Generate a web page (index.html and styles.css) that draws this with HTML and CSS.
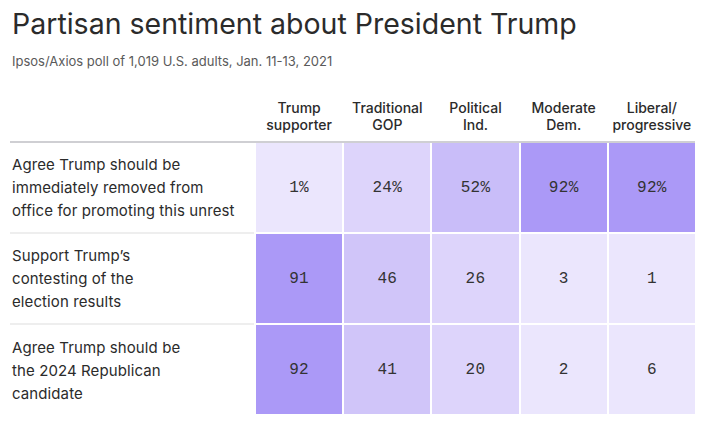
FILE: index.html
```html
<!DOCTYPE html>
<html>
<head>
<meta charset="utf-8">
<link rel="stylesheet" href="styles.css">
</head>
<body>
<div class="chart">
  <h1 class="title">Partisan sentiment about President Trump</h1>
  <p class="sub">Ipsos/Axios poll of 1,019 U.S. adults, Jan. 11-13, 2021</p>
  <div class="table">
    <div class="head">
      <div class="hlabel"></div>
      <div class="hcell">Trump<br>supporter</div>
      <div class="hcell">Traditional<br>GOP</div>
      <div class="hcell">Political<br>Ind.</div>
      <div class="hcell">Moderate<br>Dem.</div>
      <div class="hcell">Liberal/<br>progressive</div>
    </div>
    <div class="row first">
      <div class="label">Agree Trump should be immediately removed from office for promoting this unrest</div>
      <div class="cell c1">1%</div>
      <div class="cell c3">24%</div>
      <div class="cell c4">52%</div>
      <div class="cell c6">92%</div>
      <div class="cell c6">92%</div>
    </div>
    <div class="row">
      <div class="label">Support Trump’s<br>contesting of the<br>election results</div>
      <div class="cell c6">91</div>
      <div class="cell c4b">46</div>
      <div class="cell c3">26</div>
      <div class="cell c1">3</div>
      <div class="cell c1">1</div>
    </div>
    <div class="row">
      <div class="label">Agree Trump should be<br>the 2024 Republican<br>candidate</div>
      <div class="cell c6">92</div>
      <div class="cell c4b">41</div>
      <div class="cell c3">20</div>
      <div class="cell c1">2</div>
      <div class="cell c1">6</div>
    </div>
  </div>
</div>
</body>
</html>
```
FILE: styles.css
```css
html, body {
  margin: 0;
  padding: 0;
  background: #ffffff;
}
body {
  font-family: Inter, "Noto Sans", sans-serif;
  color: #333333;
}
.chart {
  padding: 6px 15px 0 10px;
}
.title {
  margin: 0 0 0 2px;
  font-size: 28.5px;
  font-weight: 400;
  line-height: 36px;
  color: #2b2b2b;
}
.sub {
  margin: 10px 0 0 2px;
  font-size: 13px;
  line-height: 18px;
  color: #5a5a5a;
}
.table {
  margin-top: 29px;
  width: 685px;
}
.head {
  display: grid;
  grid-template-columns: 244px repeat(5, 1fr);
  column-gap: 2px;
  padding-bottom: 8px;
  border-bottom: 2px solid #cfcfd3;
}
.hcell {
  text-align: center;
  font-size: 14px;
  line-height: 17px;
  color: #2b2b2b;
  font-weight: 500;
}
.row {
  display: grid;
  grid-template-columns: 244px repeat(5, 1fr);
  column-gap: 2px;
  height: 89px;
  margin-top: 2px;
}
.row.first {
  margin-top: 0;
}
.label {
  display: flex;
  align-items: center;
  padding-left: 2px;
  padding-right: 10px;
  font-size: 15px;
  letter-spacing: 0.1px;
  line-height: 23px;
  color: #2b2b2b;
  border-bottom: 2px solid #eeeeee;
  margin-bottom: -2px;
}
.row:last-child .label {
  border-bottom: none;
}
.cell {
  display: flex;
  align-items: center;
  justify-content: center;
  font-family: "Liberation Mono", "DejaVu Sans Mono", monospace;
  font-size: 16px;
  letter-spacing: 0.3px;
  color: #333333;
}
.c1 { background: #ebe6fd; }
.c3 { background: #ddd4fb; }
.c4 { background: #c9bdf9; }
.c4b { background: #d0c5f9; }
.c6 { background: #ab99f7; }
```
